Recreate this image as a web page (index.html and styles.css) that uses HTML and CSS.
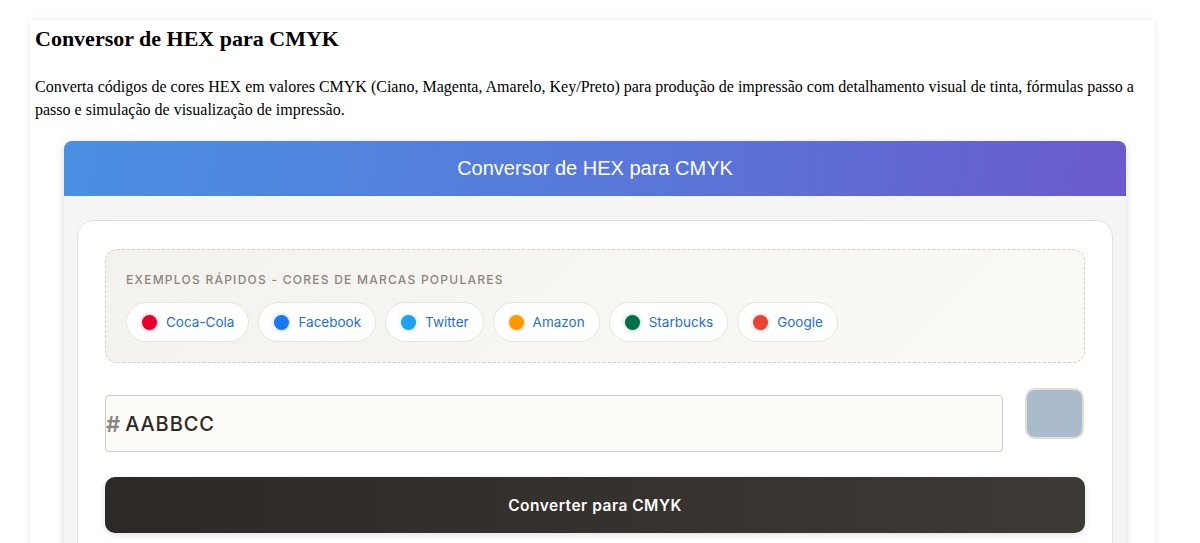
FILE: index.html
```html
<!DOCTYPE html>
<html>
<head>
    <link rel="stylesheet" href="styles.css">
</head>
<body>
    <div class="page">
        <h2>Conversor de HEX para CMYK</h2>
        <p class="intro">Converta códigos de cores HEX em valores CMYK (Ciano, Magenta, Amarelo, Key/Preto) para produção de impressão com detalhamento visual de tinta, fórmulas passo a passo e simulação de visualização de impressão.</p>

        <div class="tool">
            <div class="tool-header">Conversor de HEX para CMYK</div>
            <div class="tool-body">
                <div class="card">
                    <div class="examples">
                        <div class="examples-title">Exemplos Rápidos - Cores de Marcas Populares</div>
                        <div class="chips">
                            <button class="chip"><span class="dot dot-coke"></span>Coca-Cola</button>
                            <button class="chip"><span class="dot dot-fb"></span>Facebook</button>
                            <button class="chip"><span class="dot dot-tw"></span>Twitter</button>
                            <button class="chip"><span class="dot dot-amz"></span>Amazon</button>
                            <button class="chip"><span class="dot dot-sb"></span>Starbucks</button>
                            <button class="chip"><span class="dot dot-goo"></span>Google</button>
                        </div>
                    </div>

                    <div class="input-row">
                        <div class="hex-field">
                            <span class="hash">#</span>
                            <input type="text" id="hexInput" value="AABBCC" maxlength="6">
                        </div>
                        <div class="swatch" id="swatch"></div>
                    </div>

                    <button class="convert-btn" onclick="convert()">Converter para CMYK</button>
                </div>
            </div>
        </div>
    </div>
    <script>
        // atualiza a amostra enquanto digita
        const hexInput = document.getElementById("hexInput");
        hexInput.addEventListener("input", function () {
            const v = hexInput.value.trim();
            if (/^[0-9a-fA-F]{6}$/.test(v)) {
                document.getElementById("swatch").style.background = "#" + v;
            }
        });

        function convert() {
            // placeholder
        }
    </script>
</body>
</html>
```

FILE: styles.css
```css
body {
    margin: 0;
    background-color: #ffffff;
    font-family: "Liberation Serif", "Times New Roman", serif;
    color: #000;
}

.page {
    width: 1115px;
    margin: 20px 0 0 30px;
    padding: 0 5px 40px;
    background: #fff;
    box-shadow: 0 0 8px rgba(0, 0, 0, 0.08);
}

h2 {
    margin: 0;
    padding-top: 5px;
    font-size: 22px;
    line-height: 28px;
}

.intro {
    margin: 22px 0 20px;
    font-size: 16px;
    line-height: 23px;
}

/* Tool card */
.tool {
    width: 1062px;
    margin-left: 29px;
    border-radius: 8px;
    overflow: hidden;
    background: #f5f5f5;
    box-shadow: 0 2px 8px rgba(0, 0, 0, 0.15);
}

.tool-header {
    height: 55px;
    display: flex;
    align-items: center;
    justify-content: center;
    background: linear-gradient(100deg, #4a90e2 0%, #5a74d8 60%, #6b5acd 100%);
    color: #fff;
    font-family: "Liberation Sans", Arial, sans-serif;
    font-size: 20px;
}

.tool-body {
    padding: 24px 13px 0;
}

.card {
    background: #fff;
    border: 1px solid #e6e2da;
    border-radius: 16px;
    padding: 28px 27px 30px;
    font-family: "Inter", "Open Sans", sans-serif;
}

/* Examples */
.examples {
    border: 1px dashed #d6d1c4;
    border-radius: 12px;
    background: linear-gradient(135deg, #f4f2ee 0%, #fbfaf7 100%);
    padding: 22px 20px 20px;
}

.examples-title {
    font-size: 12px;
    font-weight: 500;
    letter-spacing: 1.25px;
    text-transform: uppercase;
    color: #8a857e;
    margin-bottom: 15px;
}

.chips {
    display: flex;
    gap: 9px;
    flex-wrap: wrap;
}

.chip {
    display: flex;
    align-items: center;
    gap: 9px;
    height: 40px;
    padding: 0 14px 0 15px;
    border: 1px solid #e8e4dc;
    border-radius: 20px;
    background: #fff;
    font-family: "Inter", "Open Sans", sans-serif;
    font-size: 13.5px;
    color: #1f6fce;
    cursor: pointer;
}

.dot {
    width: 15px;
    height: 15px;
    border-radius: 50%;
}

.dot-coke { background: #e4002b; box-shadow: 0 0 4px rgba(228, 0, 43, 0.4); }
.dot-fb { background: #1877f2; box-shadow: 0 0 4px rgba(24, 119, 242, 0.4); }
.dot-tw { background: #1da1f2; box-shadow: 0 0 4px rgba(29, 161, 242, 0.4); }
.dot-amz { background: #ff9900; box-shadow: 0 0 4px rgba(255, 153, 0, 0.4); }
.dot-sb { background: #00704a; box-shadow: 0 0 4px rgba(0, 112, 74, 0.4); }
.dot-goo { background: #ea4335; box-shadow: 0 0 4px rgba(234, 67, 53, 0.4); }

/* Input row */
.input-row {
    display: flex;
    align-items: flex-start;
    gap: 22px;
    margin-top: 25px;
}

.hex-field {
    flex: 1;
    display: flex;
    align-items: center;
    height: 55px;
    margin-top: 7px;
    border: 1px solid #cfccc6;
    border-radius: 4px;
    background: #fcfbf8;
}

.hash {
    font-size: 22px;
    color: #8a857e;
    font-weight: 600;
}

.hex-field input {
    flex: 1;
    border: none;
    outline: none;
    background: transparent;
    padding: 0 0 0 5px;
    font-family: "Inter", "Open Sans", sans-serif;
    font-size: 20px;
    font-weight: 500;
    letter-spacing: 0.9px;
    color: #2d2a26;
}

.swatch {
    width: 55px;
    height: 47px;
    margin-right: 1px;
    border: 2px solid #e2ddd5;
    border-radius: 10px;
    background: #aabbcc;
}

.convert-btn {
    display: block;
    width: 100%;
    height: 56px;
    margin-top: 25px;
    border: none;
    border-radius: 10px;
    background: linear-gradient(90deg, #2d2926 0%, #3d3a36 100%);
    color: #fff;
    font-family: "Inter", "Open Sans", sans-serif;
    font-size: 15.5px;
    font-weight: 600;
    letter-spacing: 0.5px;
    cursor: pointer;
    box-shadow: 0 2px 6px rgba(0, 0, 0, 0.12);
}
```
